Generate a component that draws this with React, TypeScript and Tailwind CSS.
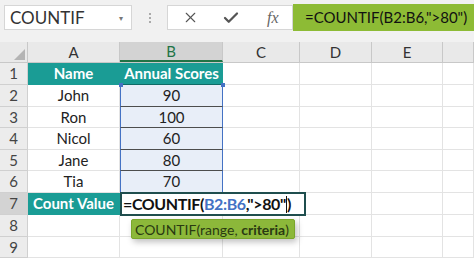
import { X, Check } from 'lucide-react';

const font = { fontFamily: 'Lato, "Open Sans", sans-serif' };

const rows = [
  { n: 1, h: 'h-[22px]', a: 'Name', b: 'Annual Scores', head: true },
  { n: 2, h: 'h-[22px]', a: 'John', b: '90' },
  { n: 3, h: 'h-[21px]', a: 'Ron', b: '100' },
  { n: 4, h: 'h-[22px]', a: 'Nicol', b: '60' },
  { n: 5, h: 'h-[21px]', a: 'Jane', b: '80' },
  { n: 6, h: 'h-[22px]', a: 'Tia', b: '70' },
  { n: 7, h: 'h-[22px]', a: 'Count Value', b: '', count: true },
  { n: 8, h: 'h-[22px]', a: '', b: '' },
  { n: 9, h: 'h-[21px]', a: '', b: '' },
];

const cols = ['w-[77px]', 'w-[72px]', 'w-[71px]', 'flex-1'];

export default function App() {
  return (
    <div className="relative w-[474px] h-[258px] overflow-hidden bg-white text-[#222]" style={font}>
      {/* formula bar */}
      <div className="h-[42px] bg-[#f1f1f1] flex items-start pt-[5px] pl-[4px]">
        <div className="shrink-0 w-[128px] h-[25px] bg-white border border-[#d6d6d6] flex items-center justify-between pl-[5px] pr-[8px]">
          <span className="text-[17px] text-[#333]">COUNTIF</span>
          <span className="text-[8px] text-[#777]">▾</span>
        </div>
        <div className="shrink-0 w-[35px] h-[25px] flex flex-col items-center justify-center gap-[2px]">
          <span className="w-[2px] h-[2px] bg-[#aaa]" />
          <span className="w-[2px] h-[2px] bg-[#aaa]" />
          <span className="w-[2px] h-[2px] bg-[#aaa]" />
        </div>
        <div className="shrink-0 w-[126px] h-[25px] bg-white border border-[#d6d6d6] flex items-center">
          <X size={17} strokeWidth={1.5} className="ml-[14px] text-[#555]" />
          <Check size={18} strokeWidth={3} className="ml-[23px] text-[#555]" />
          <span className="ml-[27px] text-[16px] italic text-[#666]" style={{ fontFamily: '"Liberation Serif", serif' }}>
            fx
          </span>
        </div>
        <div className="flex-1 min-w-0 -mt-[1px] h-[27px] bg-[#8dbb35] flex items-center pl-[12px]">
          <span className="text-[15px] text-[#111] whitespace-nowrap">=COUNTIF(B2:B6,"&gt;80")</span>
        </div>
      </div>

      {/* column headers */}
      <div className="flex h-[21px] bg-[#e9e9e9] border-b border-[#c8c8c8]">
        <div className="w-[28px] border-r border-[#c8c8c8] flex items-end justify-end pr-[2px] pb-[2px]">
          <div className="w-0 h-0 border-l-[11px] border-l-transparent border-b-[11px] border-b-[#b4b4b4]" />
        </div>
        <div className="w-[92px] border-r border-[#c8c8c8] flex items-center justify-center text-[15px] text-[#333]">A</div>
        <div className="w-[103px] bg-[#d3d3d3] border-r border-[#c8c8c8] border-b-2 border-b-[#217346] flex items-center justify-center text-[15px] text-[#217346]">
          B
        </div>
        {['C', 'D', 'E', ''].map((c, i) => (
          <div key={i} className={`${cols[i]} border-r border-[#c8c8c8] flex items-center justify-center text-[15px] text-[#333]`}>
            {c}
          </div>
        ))}
      </div>

      {/* rows */}
      {rows.map((r) => (
        <div key={r.n} className={`flex ${r.h}`}>
          <div
            className={`w-[28px] flex items-center justify-center text-[15px] text-[#444] border-r border-b border-[#d0d0d0] ${
              r.count ? 'bg-[#d3d3d3]' : 'bg-[#ececec]'
            }`}
          >
            {r.n}
          </div>
          <div
            className={`w-[92px] flex items-center justify-center text-[15px] border-r border-b ${
              r.head || r.count
                ? 'bg-[#1a9c95] text-white font-bold border-[#1a9c95]'
                : 'border-[#e3e3e3]'
            }`}
          >
            {r.a}
          </div>
          <div
            className={`w-[103px] flex items-center justify-center text-[15px] ${
              r.head
                ? 'bg-[#1a9c95] text-white font-bold border-b border-[#0f6b66]'
                : r.n >= 2 && r.n <= 6
                ? 'bg-[#e8eef8] border-l border-r border-[#4472c4] border-b border-b-[#4d4d4d]'
                : 'border-r border-b border-[#e3e3e3]'
            }`}
          >
            {r.b}
          </div>
          {cols.map((c, i) => (
            <div key={i} className={`${c} border-r border-b border-[#e3e3e3]`} />
          ))}
        </div>
      ))}

      {/* selection handles */}
      <div className="absolute left-[119px] top-[83px] w-[4px] h-[4px] bg-[#4472c4]" />
      <div className="absolute left-[221px] top-[83px] w-[4px] h-[4px] bg-[#4472c4]" />

      {/* editing cell B7 */}
      <div className="absolute left-[120px] top-[192px] w-[186px] h-[24px] bg-white border-2 border-[#1f4e4e] flex items-center pl-[1px]">
        <span className="text-[16px] font-bold text-[#111] whitespace-nowrap tracking-[-0.4px]">
          =COUNTIF(<span className="text-[#4472c4]">B2:B6</span>,"&gt;80"
        </span>
        <span className="w-[1px] h-[17px] bg-[#111]" />
        <span className="text-[16px] font-bold text-[#111]">)</span>
      </div>

      {/* function tooltip */}
      <div className="absolute left-[131px] top-[219px] w-[164px] h-[20px] bg-[#8cb83a] border border-[#7aa62c] rounded-[2px] flex items-center pl-[3px] shadow-[2px_3px_6px_rgba(0,0,0,0.25)]">
        <span className="text-[14px] text-[#2a3a12] whitespace-nowrap">
          COUNTIF(range, <span className="font-bold">criteria</span>)
        </span>
      </div>
    </div>
  );
}
